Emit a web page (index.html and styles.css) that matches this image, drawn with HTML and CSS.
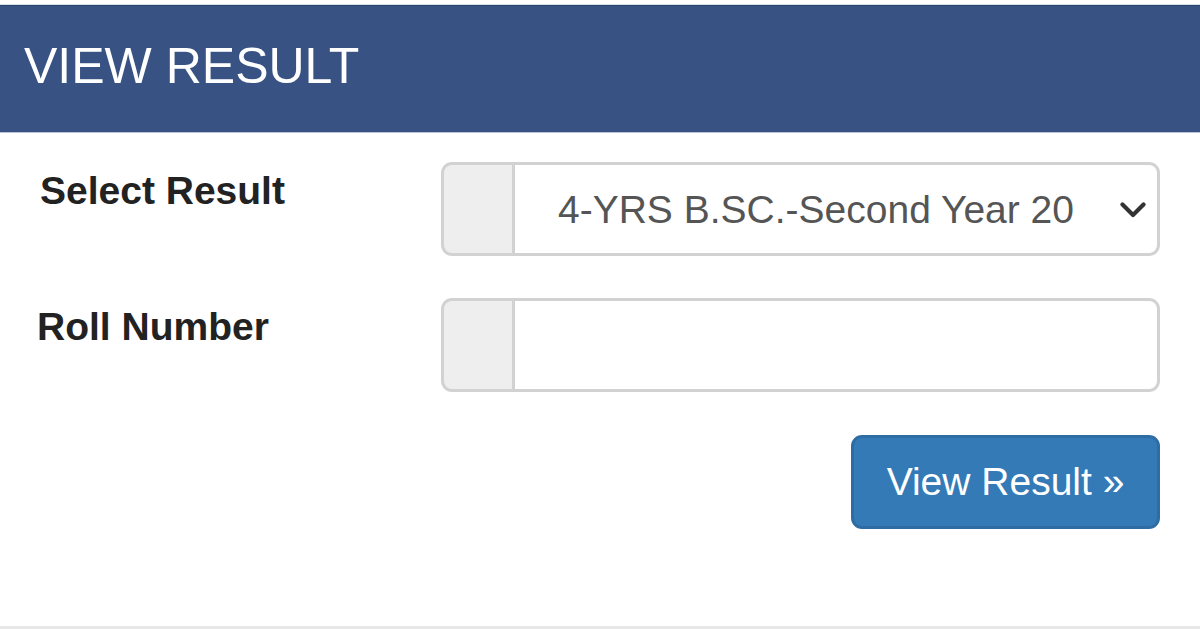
FILE: index.html
```html
<!DOCTYPE html>
<html>
<head>
<meta charset="utf-8">
<title>View Result</title>
<link rel="stylesheet" href="styles.css">
</head>
<body>
<div class="panel">
  <div class="panel-heading">
    <h3 class="panel-title">VIEW RESULT</h3>
  </div>
  <div class="panel-body">
    <form class="form">
      <div class="row">
        <label class="label" for="result">Select Result</label>
        <div class="input-group">
          <span class="addon"></span>
          <div class="select-wrap">
            <select id="result" class="control select">
              <option>4-YRS B.SC.-Second Year 20</option>
            </select>
            <svg class="chevron" viewBox="0 0 26 16" width="26" height="16" aria-hidden="true">
              <path d="M2.5 2.5 L13 13 L23.5 2.5" fill="none" stroke="#333" stroke-width="4.2" stroke-linecap="round" stroke-linejoin="round"/>
            </svg>
          </div>
        </div>
      </div>
      <div class="row">
        <label class="label label-roll" for="roll">Roll Number</label>
        <div class="input-group">
          <span class="addon"></span>
          <input id="roll" class="control" type="text">
        </div>
      </div>
      <div class="actions">
        <button type="button" class="btn">View Result &raquo;</button>
      </div>
    </form>
  </div>
</div>
</body>
</html>
```

FILE: styles.css
```css
html, body {
  margin: 0;
  padding: 0;
  background: #ffffff;
}

body {
  padding-top: 4px;
  font-family: "Liberation Sans", Arial, sans-serif;
  color: #222;
}

.panel {
  border-top: 1px solid #d9dde4;
  border-bottom: 3px solid #e8e8e8;
  height: 621px;
  background: #fff;
}

.panel-heading {
  background: #375283;
  height: 128px;
  border-top: 1px solid #2c456f;
  border-bottom: 1px solid #b9c3d4;
  display: flex;
  align-items: center;
  padding-left: 24px;
  box-sizing: border-box;
}

.panel-title {
  margin: 0;
  font-size: 50px;
  font-weight: normal;
  color: #ffffff;
  line-height: 1;
  padding-bottom: 7px;
}

.panel-body {
  padding-top: 29px;
}

.form {
  display: flex;
  flex-direction: column;
  gap: 42px;
  width: 1160px;
}

.row {
  display: grid;
  grid-template-columns: 441px 719px;
  align-items: start;
}

.label {
  font-size: 39px;
  font-weight: bold;
  color: #222;
  line-height: 54px;
  padding-top: 2px;
  padding-left: 40px;
}

.label-roll {
  padding-left: 37px;
}

.input-group {
  display: flex;
  height: 94px;
}

.addon {
  width: 68px;
  flex: none;
  background: #eeeeee;
  border: 3px solid #d2d2d2;
  border-right: 0;
  border-radius: 11px 0 0 11px;
}

.select-wrap {
  position: relative;
  flex: 1;
  display: flex;
}

.control {
  flex: 1;
  min-width: 0;
  margin: 0;
  height: 94px;
  box-sizing: border-box;
  border: 3px solid #d2d2d2;
  border-radius: 0 11px 11px 0;
  background: #fff;
  font-family: "Liberation Sans", Arial, sans-serif;
  font-size: 39px;
  color: #555555;
  outline: none;
}

.select {
  appearance: none;
  -webkit-appearance: none;
  padding: 0 56px 0 43px;
}

.chevron {
  position: absolute;
  right: 14px;
  top: 40px;
  pointer-events: none;
}

.actions {
  display: flex;
  justify-content: flex-end;
  margin-top: 1px;
}

.btn {
  width: 309px;
  height: 94px;
  box-sizing: border-box;
  background: #337ab7;
  border: 3px solid #2e6da4;
  border-radius: 11px;
  color: #ffffff;
  font-family: "Liberation Sans", Arial, sans-serif;
  font-size: 39px;
  padding: 0;
}
```
